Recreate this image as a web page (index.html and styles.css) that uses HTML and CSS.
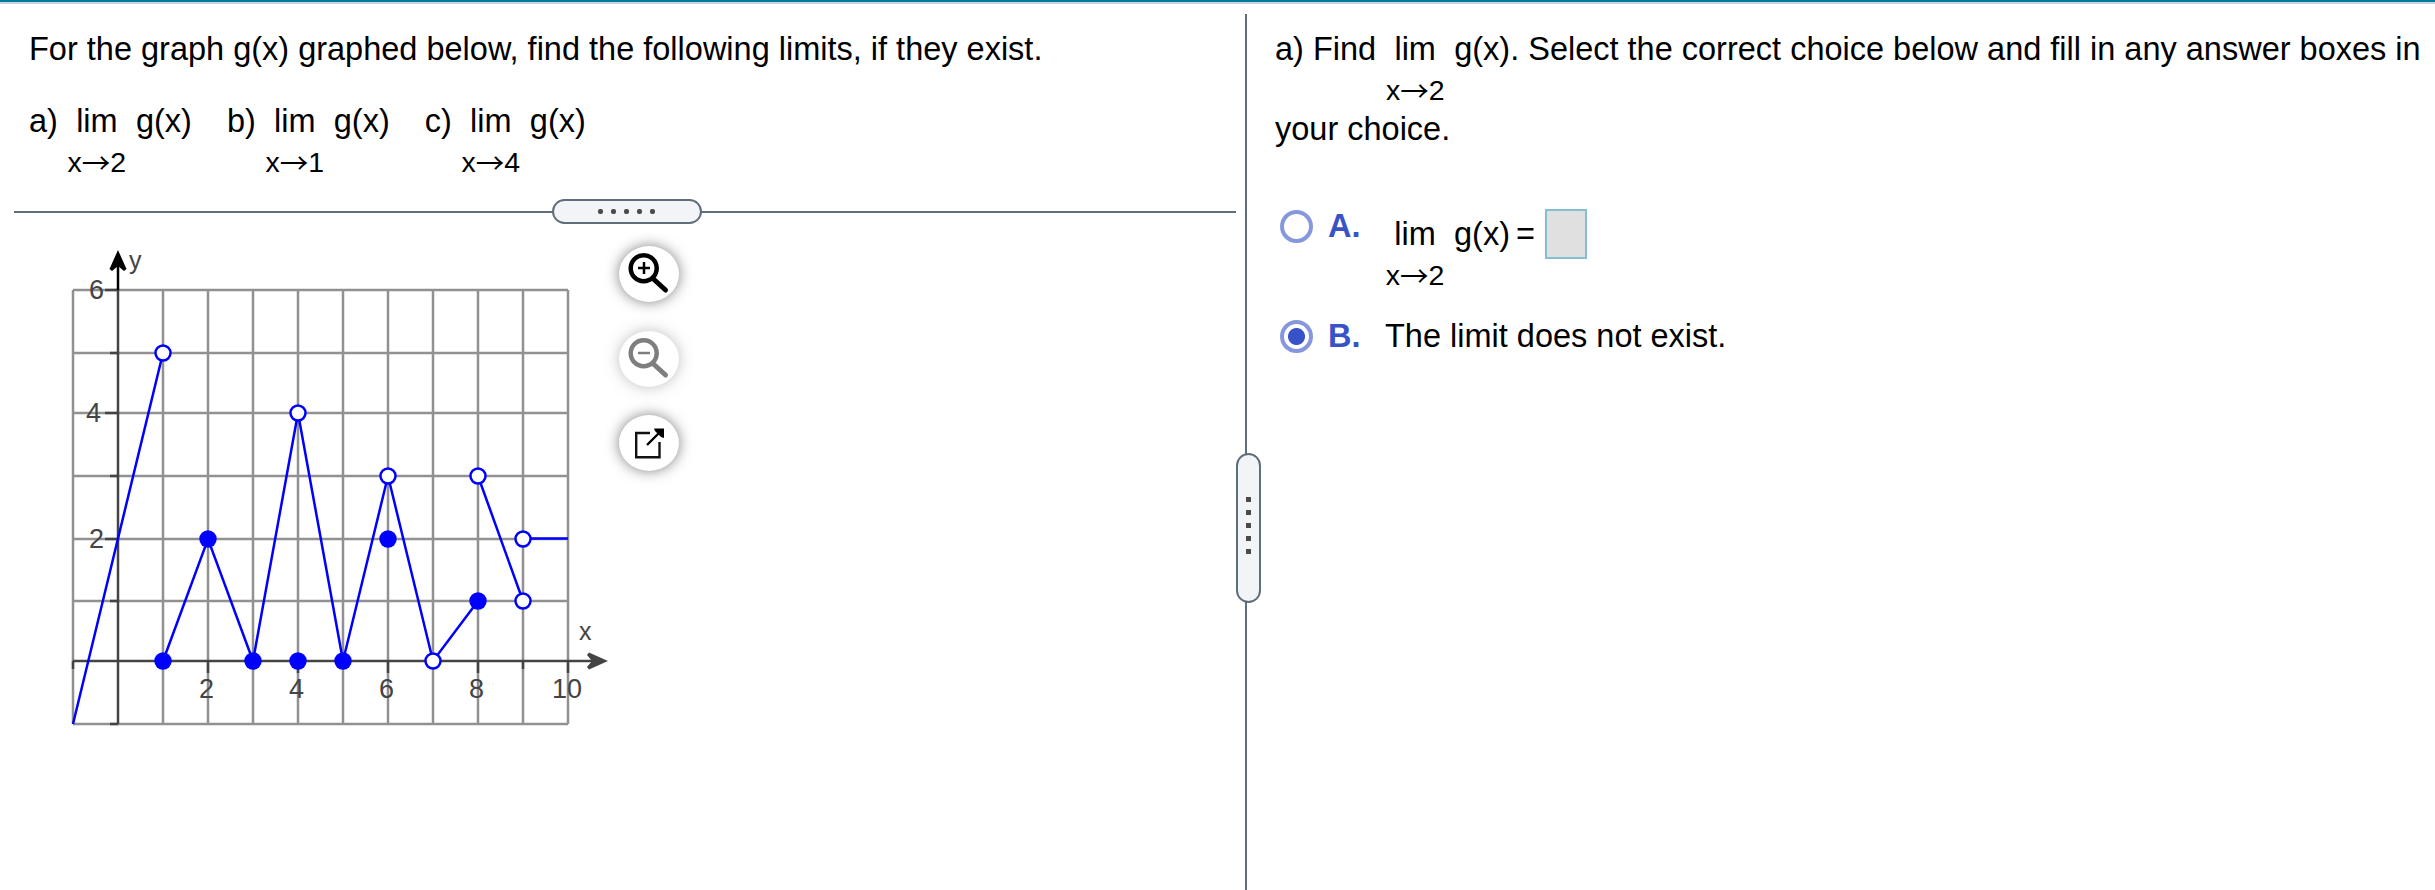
FILE: index.html
```html
<!DOCTYPE html>
<html lang="en">
<head>
  <meta charset="UTF-8">
  <meta name="viewport" content="width=device-width, initial-scale=1.0">
  <title>Limits from a Graph</title>
  <link rel="stylesheet" href="styles.css">
</head>
<body>
  <main class="player">
    <!-- Question -->
    <section class="question">
      <p class="prompt">For the graph g(x) graphed below, find the following limits, if they exist.</p>
      <div class="parts">
        <div class="part">a)<span class="lim">lim<span class="under">x<span class="to">→</span>2</span></span>g(x)</div>
        <div class="part">b)<span class="lim">lim<span class="under">x<span class="to">→</span>1</span></span>g(x)</div>
        <div class="part">c)<span class="lim">lim<span class="under">x<span class="to">→</span>4</span></span>g(x)</div>
      </div>

      <div class="divider">
        <div class="handle"><i></i><i></i><i></i><i></i><i></i></div>
      </div>

      <div class="figure">
        <svg class="graph" width="570" height="510" viewBox="50 240 570 510">
          <!-- Grid -->
          <path class="grid" d="M73 290V724M163 290V724M208 290V724M253 290V724M298 290V724M343 290V724M388 290V724M433 290V724M478 290V724M523 290V724M568 290V724M73 290H568M73 353H568M73 413H568M73 476H568M73 539H568M73 601H568M73 724H568"/>
          <!-- Axes -->
          <path class="axis" d="M118 290V724M73 661H592M73 661V669M208 661V673M298 661V673M388 661V673M478 661V673M523 661V669M568 661V673M105 290H118M110 353H118M105 413H118M110 476H118M105 539H118M110 601H118M110 724H118"/>
          <path class="axis-top" d="M118 290V262"/>
          <path class="arrow-y" d="M118 250L126.500 269L124 271L118 266L112 271L109.500 269Z"/>
          <path class="arrow-x" d="M608 661L589 652.500L587 655L592 661L587 667L589 669.500Z"/>
          <g class="labels">
            <text class="axis-name" x="129" y="269">y</text>
            <text class="axis-name" x="579" y="640">x</text>
            <text x="89" y="298.5">6</text>
            <text x="86" y="421.5">4</text>
            <text x="89" y="547.5">2</text>
            <text x="199" y="698">2</text>
            <text x="289" y="698">4</text>
            <text x="379" y="698">6</text>
            <text x="469" y="698">8</text>
            <text x="552" y="698">10</text>
          </g>
          <!-- g(x) -->
          <path class="curve" d="M73 724L163 353M163 661L208 539L253 661L298 413L343 661L388 476L433 661L478 601M478 476L523 601M523 538.5H568"/>
          <g class="closed">
            <circle cx="163" cy="661" r="8.7"/>
            <circle cx="208" cy="539" r="8.7"/>
            <circle cx="253" cy="661" r="8.7"/>
            <circle cx="298" cy="661" r="8.7"/>
            <circle cx="343" cy="661" r="8.7"/>
            <circle cx="388" cy="539" r="8.7"/>
            <circle cx="478" cy="601" r="8.7"/>
          </g>
          <g class="open">
            <circle cx="163" cy="353" r="7.5"/>
            <circle cx="298" cy="413" r="7.5"/>
            <circle cx="388" cy="476" r="7.5"/>
            <circle cx="433" cy="661" r="7.5"/>
            <circle cx="478" cy="476" r="7.5"/>
            <circle cx="523" cy="539" r="7.5"/>
            <circle cx="523" cy="601" r="7.5"/>
          </g>
        </svg>

        <div class="tools">
          <button class="tool" aria-label="Zoom in">
            <svg width="60" height="56" viewBox="0 0 60 56">
              <circle cx="24.7" cy="22.2" r="13" fill="none" stroke="#000" stroke-width="4.5"/>
              <path d="M35 33.5L46.5 44" stroke="#000" stroke-width="5" stroke-linecap="round"/>
              <path d="M19 22H31M25 16V28" stroke="#000" stroke-width="2.5"/>
            </svg>
          </button>
          <button class="tool disabled" aria-label="Zoom out">
            <svg width="60" height="56" viewBox="0 0 60 56">
              <circle cx="24.7" cy="22.2" r="13" fill="none" stroke="#000" stroke-width="4.5"/>
              <path d="M35 33.5L46.5 44" stroke="#000" stroke-width="5" stroke-linecap="round"/>
              <path d="M19 22H31" stroke="#000" stroke-width="2.5"/>
            </svg>
          </button>
          <button class="tool" aria-label="Open in new window">
            <svg width="60" height="56" viewBox="0 0 60 56">
              <path d="M31 18H17.2V42.2H40.5V27" fill="none" stroke="#111" stroke-width="2.4"/>
              <path d="M28 30L41 17" stroke="#000" stroke-width="2.4"/>
              <path d="M35 13.500H45V23L42 22L36 16Z" fill="#000"/>
            </svg>
          </button>
        </div>
      </div>
    </section>

    <div class="splitter">
      <div class="handle vertical"><i></i><i></i><i></i><i></i><i></i></div>
    </div>

    <!-- Answer -->
    <section class="answer">
      <p class="prompt">a) Find <span class="lim">lim<span class="under">x<span class="to">→</span>2</span></span>g(x). Select the correct choice below and fill in any answer boxes in<br>your choice.</p>
      <div class="choices">
        <label class="choice first">
          <span class="radio"></span>
          <span class="letter">A.</span>
          <span class="text equation"><span class="lim">lim<span class="under">x<span class="to">→</span>2</span></span>g(x)<span class="equals">=</span><span class="box"></span></span>
        </label>
        <label class="choice">
          <span class="radio checked"></span>
          <span class="letter">B.</span>
          <span class="text">The limit does not exist.</span>
        </label>
      </div>
    </section>
  </main>
</body>
</html>
```
FILE: styles.css
```css
* {
  box-sizing: border-box;
}
body {
  margin: 0;
  height: 890px;
  overflow: hidden;
  background-color: #fff;
  border-top: 2px solid #007a9c;
  font-family: "Liberation Sans", Arial, sans-serif;
  font-size: 32.5px;
  line-height: 38px;
  color: #000;
}
p {
  margin: 0;
}
.player {
  display: flex;
  height: 888px;
  border-top: 2px solid #c9d3dd;
}
.question {
  flex: 0 0 1236px;
  padding: 26px 0 0 14px;
}
.prompt {
  white-space: nowrap;
}
.question .prompt {
  padding-left: 15px;
}
.parts {
  display: flex;
  gap: 35px;
  height: 109px;
  margin-top: 34px;
  padding-left: 15px;
}
.part {
  display: flex;
  align-items: baseline;
}
.lim {
  display: inline-flex;
  flex-direction: column;
  align-items: center;
  width: 60px;
  margin: 0 9px;
}
.under {
  height: 42px;
  font-size: 28.5px;
  line-height: 44px;
  white-space: nowrap;
}
.to {
  font-family: "Noto Sans CJK JP", sans-serif;
  line-height: 0;
  vertical-align: -2px;
}
.prompt .lim {
  margin-left: 0;
}

/* Dividers */
.divider {
  display: flex;
  align-items: center;
  justify-content: center;
  height: 25px;
  margin-top: -12px;
  padding-left: 3px;
  background: linear-gradient(#5f6e7b, #5f6e7b) 0 12px / 100% 2px no-repeat;
}
.handle {
  display: flex;
  align-items: center;
  justify-content: center;
  gap: 8px;
  width: 150px;
  height: 25px;
  border: 2px solid #5f6e7b;
  border-radius: 13px;
  background-color: #f3f4f7;
}
.handle i {
  width: 5px;
  height: 5px;
  border-radius: 2px;
  background-color: #4a4a4a;
}
.splitter {
  flex: 0 0 25px;
  margin-top: 10px;
  padding-top: 439px;
  background: linear-gradient(#5f6e7b, #5f6e7b) 9px 0 / 2px 100% no-repeat;
}
.vertical {
  flex-direction: column;
  width: 25px;
  height: 150px;
  padding-bottom: 5px;
}
.vertical i {
  border-radius: 0;
}

/* Graph */
.figure {
  display: flex;
  margin-top: 16px;
  padding-left: 36px;
}
.grid,
.axis,
.axis-top,
.curve {
  fill: none;
  stroke-width: 2.5;
}
.grid {
  stroke: #919191;
}
.axis {
  stroke: #444;
}
.axis-top {
  stroke: #000;
}
.arrow-x {
  fill: #444;
}
.labels {
  fill: #444;
  font-size: 27px;
}
.axis-name {
  font-size: 25px;
}
.curve {
  stroke: #00f;
}
.closed {
  fill: #00f;
}
.open {
  fill: #fff;
  stroke: #00f;
  stroke-width: 2.5;
}
.tools {
  display: flex;
  flex-direction: column;
  gap: 28.500px;
  margin-left: -1px;
  padding-top: 6px;
}
.tool {
  width: 60px;
  height: 56px;
  padding: 0;
  border: none;
  border-radius: 50%;
  background-color: #fff;
  box-shadow: 0 0 14px rgba(0, 0, 0, 0.5);
}
.tool svg {
  display: block;
}
.disabled {
  opacity: 0.5;
}

/* Answer choices */
.answer {
  padding: 26px 0 0 14px;
}
.choices {
  padding-left: 5px;
}
.choice {
  display: flex;
}
.first {
  height: 110px;
  margin-top: 58px;
}
.radio {
  width: 33px;
  height: 33px;
  margin-top: 4px;
  border: 4px solid #8797dd;
  border-radius: 50%;
}
.checked {
  background: radial-gradient(circle, #3853c8 8px, #fff 9px);
}
.letter {
  width: 57px;
  margin-left: 15px;
  padding-top: 1px;
  font-weight: bold;
  color: #3853c8;
}
.text {
  padding-top: 1px;
  white-space: nowrap;
}
.equation {
  display: flex;
  align-items: baseline;
  padding-top: 9px;
}
.equation .lim {
  margin-left: 0;
}
.equals {
  margin: 0 10px 0 6px;
}
.box {
  align-self: flex-start;
  width: 42px;
  height: 50px;
  margin-top: -6px;
  border: 2px solid #83bfce;
  background-color: #e0e0e0;
}
```
